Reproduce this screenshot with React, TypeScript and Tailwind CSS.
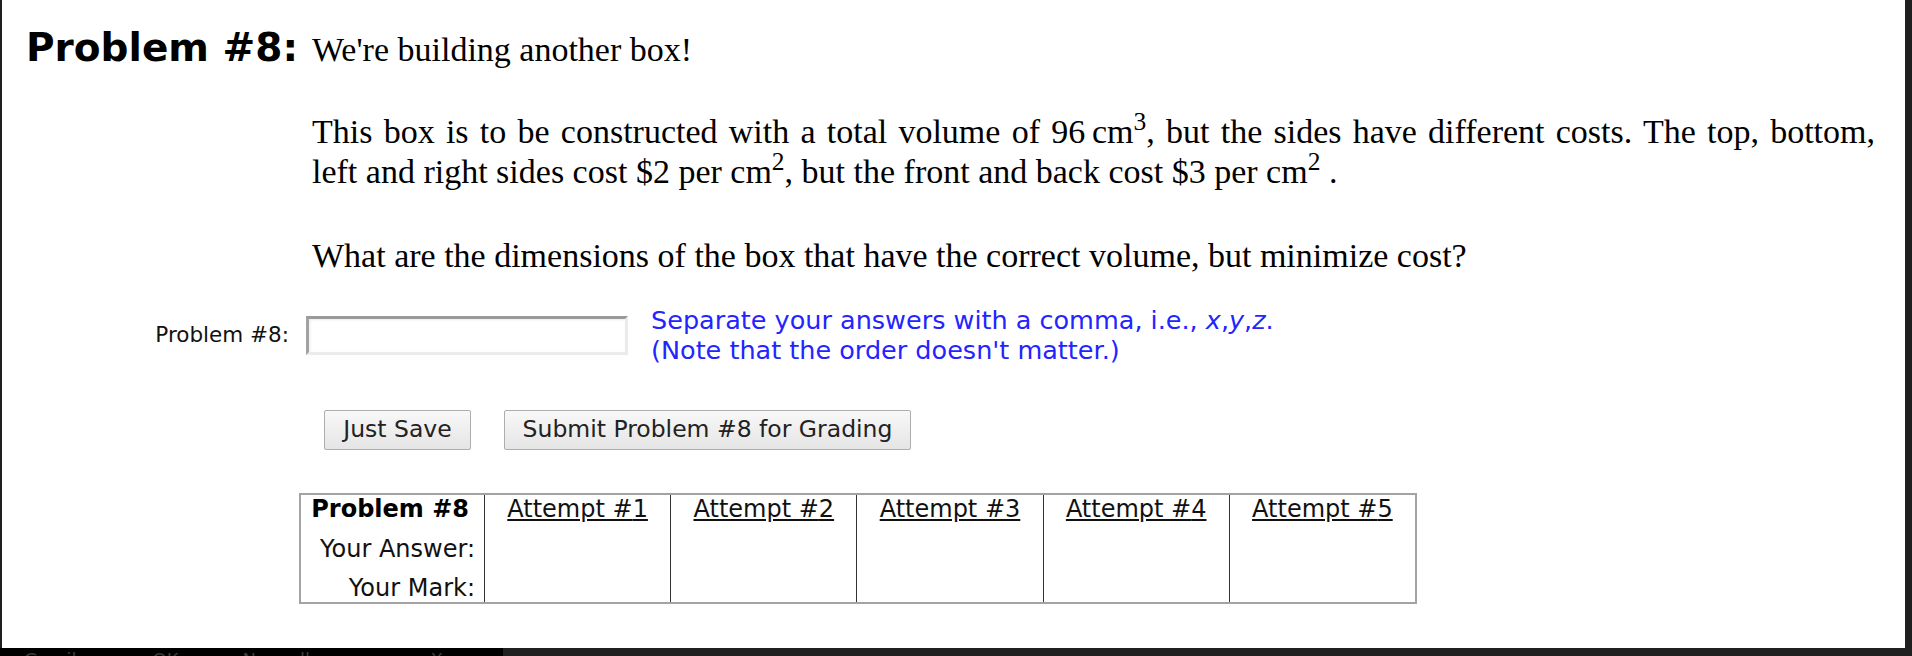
export default function App() {
  const attempts = [1, 2, 3, 4, 5];
  return (
    <div className="w-[1912px] h-[656px] bg-[#1f1f1f] flex flex-col overflow-hidden">
      <div className="flex h-[648px] shrink-0">
        <div className="w-[2px] bg-[#1f1f1f] shrink-0" />
        <div className="w-[1903px] shrink-0 bg-white">
          {/* Problem text */}
          <div className="flex items-baseline pt-[28px] pl-[24px]">
            <h1 className="w-[286px] shrink-0 font-['DejaVu_Sans',sans-serif] font-bold text-[39px] leading-[40px] text-black">
              Problem #8:
            </h1>
            <div className="w-[1563px] shrink-0 font-['Liberation_Serif',serif] text-[34px] leading-[40px] text-black">
              <p>We're building another box!</p>
              <p className="mt-[42px] text-justify">
                <span className="block [text-align-last:justify]">
                  This box is to be constructed with a total volume of 96{"\u2009"}cm<sup>3</sup>, but the sides have different costs. The top, bottom,
                </span>
                <span className="block">
                  left and right sides cost $2 per cm<sup>2</sup>, but the front and back cost $3 per cm<sup>2</sup> .
                </span>
              </p>
              <p className="mt-[44px]">What are the dimensions of the box that have the correct volume, but minimize cost?</p>
            </div>
          </div>

          {/* Answer row */}
          <div className="flex items-center mt-[29px]">
            <div className="w-[287px] shrink-0 text-right font-['DejaVu_Sans',sans-serif] text-[21.5px] text-[#111]">
              Problem #8:
            </div>
            <div className="ml-[17px] w-[322px] h-[39px] shrink-0 border-[3px] border-t-[#9a9a9a] border-l-[#a2a2a2] border-r-[#ebebeb] border-b-[#ebebeb] bg-white shadow-[inset_1px_1px_3px_rgba(0,0,0,0.08)]" />
            <div className="ml-[23px] font-['DejaVu_Sans',sans-serif] text-[25.5px] leading-[30px] text-[#2424ff]">
              <div>
                Separate your answers with a comma, i.e., <i>x</i>,<i>y</i>,<i>z</i>.
              </div>
              <div>(Note that the order doesn't matter.)</div>
            </div>
          </div>

          {/* Buttons */}
          <div className="flex gap-[33px] ml-[322px] mt-[45px]">
            <button className="w-[147px] h-[40px] border border-[#adadad] rounded-[2px] bg-linear-to-b from-[#f8f8f8] to-[#e5e5e5] font-['DejaVu_Sans',sans-serif] text-[23.5px] text-[#222]">
              Just Save
            </button>
            <button className="w-[407px] h-[40px] border border-[#adadad] rounded-[2px] bg-linear-to-b from-[#f8f8f8] to-[#e5e5e5] font-['DejaVu_Sans',sans-serif] text-[23.5px] text-[#222]">
              Submit Problem #8 for Grading
            </button>
          </div>

          {/* Attempts table */}
          <div className="ml-[297px] mt-[43px] w-[1118px] border-2 border-[#a3a3a3] grid grid-cols-[183px_repeat(5,1fr)] font-['DejaVu_Sans',sans-serif] text-[24px] text-black">
            <div className="flex flex-col gap-[11.5px] leading-[28px] text-right pr-[9px]">
              <div className="font-bold pr-[6px]">Problem #8</div>
              <div className="text-[#111]">Your Answer:</div>
              <div className="text-[#111]">Your Mark:</div>
            </div>
            {attempts.map((n) => (
              <div key={n} className="border-l border-[#333] text-center leading-[28px]">
                <span className="underline text-[#111]">Attempt #{n}</span>
              </div>
            ))}
          </div>
        </div>
        <div className="w-[7px] bg-[#1f1f1f] shrink-0" />
      </div>
      <div className="h-[8px] flex shrink-0">
        <div className="w-[503px] bg-black overflow-hidden flex items-start pt-[3px] font-['DejaVu_Sans',sans-serif] text-[18px] leading-none text-[#3c3c3c]">
          <span className="ml-[24px]">Gmail</span>
          <span className="ml-[76px]">OK</span>
          <span className="ml-[64px]">Nouvelles</span>
          <span className="ml-[100px]">X</span>
        </div>
        <div className="flex-1 bg-[#202020]" />
      </div>
    </div>
  );
}
